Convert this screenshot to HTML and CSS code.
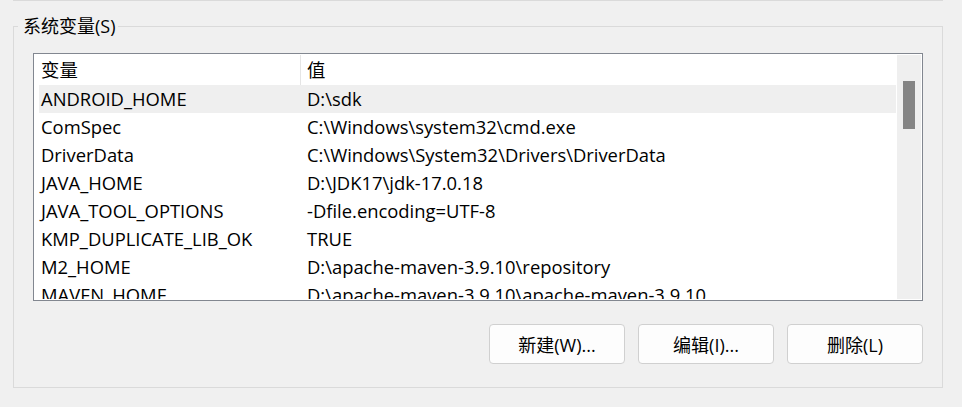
FILE: index.html
```html
<!DOCTYPE html>
<html lang="zh-CN">
<head>
<meta charset="utf-8">
<title>系统变量</title>
<link rel="stylesheet" href="styles.css">
</head>
<body>
<div class="prev-edge"></div>
<div class="group">
  <span class="legend">系统变量(S)</span>
  <div class="listbox">
    <div class="list-main">
      <div class="row head">
        <div class="c1">变量</div>
        <div class="c2">值</div>
      </div>
      <div class="row sel"><div class="c1">ANDROID_HOME</div><div class="c2">D:\sdk</div></div>
      <div class="row"><div class="c1">ComSpec</div><div class="c2">C:\Windows\system32\cmd.exe</div></div>
      <div class="row"><div class="c1">DriverData</div><div class="c2">C:\Windows\System32\Drivers\DriverData</div></div>
      <div class="row"><div class="c1">JAVA_HOME</div><div class="c2">D:\JDK17\jdk-17.0.18</div></div>
      <div class="row"><div class="c1">JAVA_TOOL_OPTIONS</div><div class="c2">-Dfile.encoding=UTF-8</div></div>
      <div class="row"><div class="c1">KMP_DUPLICATE_LIB_OK</div><div class="c2">TRUE</div></div>
      <div class="row"><div class="c1">M2_HOME</div><div class="c2">D:\apache-maven-3.9.10\repository</div></div>
      <div class="row"><div class="c1">MAVEN_HOME</div><div class="c2">D:\apache-maven-3.9.10\apache-maven-3.9.10</div></div>
    </div>
    <div class="scrollbar"><div class="thumb"></div></div>
  </div>
  <div class="buttons">
    <button class="btn">新建(W)...</button>
    <button class="btn">编辑(I)...</button>
    <button class="btn">删除(L)</button>
  </div>
</div>
</body>
</html>
```
FILE: styles.css
```css
html, body {
  margin: 0;
  padding: 0;
  background: #f0f0f0;
  height: 100%;
  overflow: hidden;
}
body {
  font-family: "Open Sans", "Noto Sans CJK SC", sans-serif;
  font-size: 18.4px;
  color: #000;
}
.prev-edge {
  height: 1px;
  margin: 0 19px 0 13px;
  background: #dadada;
}
.group {
  position: relative;
  margin: 25px 19px 0 13px;
  height: 362px;
  border: 1px solid #dadada;
  padding: 26px 19px 0 19px;
  box-sizing: border-box;
}
.legend {
  position: absolute;
  left: 4px;
  top: -11px;
  padding: 0 2px 0 5px;
  background: #f0f0f0;
  line-height: 20px;
  font-size: 18px;
}
.listbox {
  display: flex;
  height: 248px;
  border: 1px solid #828790;
  background: #fff;
  padding: 1px;
  box-sizing: border-box;
}
.list-main {
  flex: 1;
  overflow: hidden;
  padding-left: 4px;
  padding-right: 1px;
}
.row {
  display: flex;
  height: 28px;
  line-height: 28px;
  white-space: nowrap;
}
.row.head {
  height: 30px;
  line-height: 30px;
}
.row.sel {
  background: #efefef;
}
.c1 {
  width: 259px;
  padding-left: 2px;
  flex: none;
}
.c2 {
  padding-left: 7px;
}
.row.head .c2 {
  border-left: 1px solid #e5e5e5;
  padding-left: 6px;
}
.scrollbar {
  width: 24px;
  background: #efefef;
  display: flex;
  justify-content: center;
  padding-top: 26px;
  box-sizing: border-box;
}
.thumb {
  width: 12px;
  height: 48px;
  background: #858585;
}
.buttons {
  display: flex;
  justify-content: flex-end;
  gap: 13px;
  margin-top: 23px;
}
.btn {
  width: 136px;
  height: 40px;
  border: 1px solid #d0d0d0;
  border-radius: 4px;
  background: #fdfdfd;
  font-family: "Open Sans", "Noto Sans CJK SC", sans-serif;
  font-size: 18px;
  color: #000;
  padding: 0;
}
```
